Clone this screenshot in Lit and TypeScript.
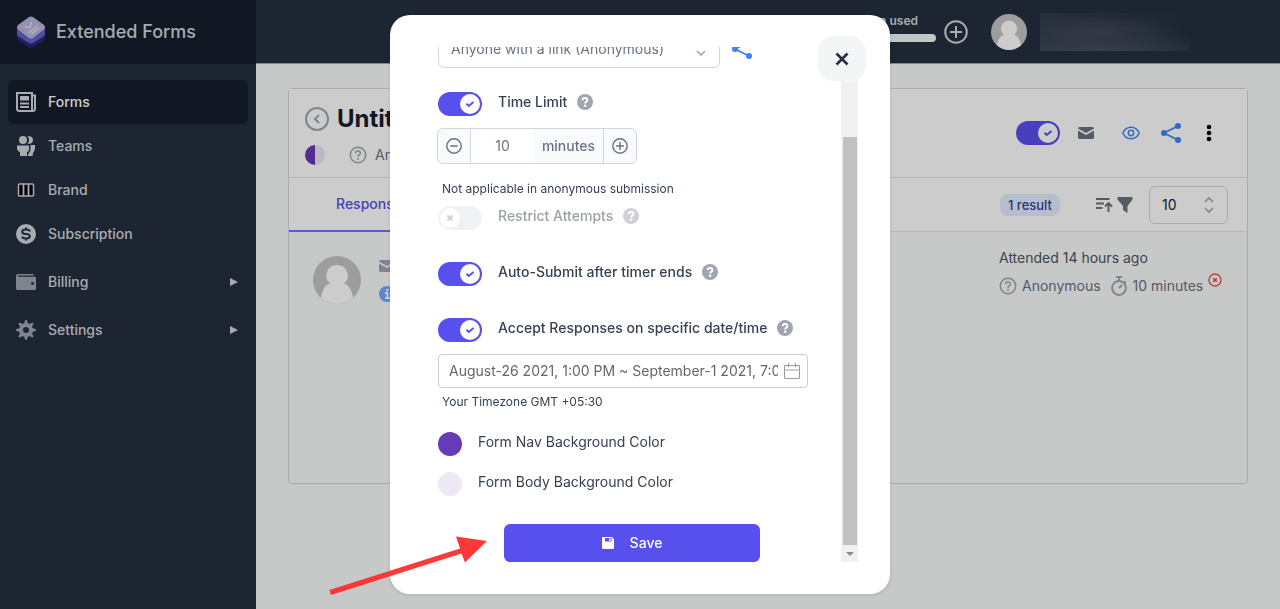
import { LitElement, html, css, svg, nothing, TemplateResult } from "lit";
import { customElement, state } from "lit/decorators.js";
import { classMap } from "lit/directives/class-map.js";

const icon = (w: number, h: number, body: TemplateResult, cls = "") =>
  html`<svg class="icon ${cls}" width=${w} height=${h} viewBox="0 0 ${w} ${h}" aria-hidden="true">${body}</svg>`;

const logo = icon(30, 32, svg`
  <path d="M1 17v5q0 1.500 1.500 2.500l10.500 6.500q2 1 4 0l10.500-6.500q1.500-1 1.500-2.500v-5z" fill="#2c2580"/>
  <path d="M1 13v5q0 1.500 1.500 2.500l10.500 6.500q2 1 4 0l10.500-6.500q1.500-1 1.500-2.500v-5z" fill="#6a60c4"/>
  <path d="M13 1q2-1.200 4 0l11 8q2 2.200 0 4.500l-11 8.500q-2 1.200-4 0l-11-8.500q-2-2.300 0-4.500z" fill="#b9b4dc"/>
  <path d="M9 11l5 .5l1.500-5M13 16.500l8-6.500M16 17.500l7-5.500" fill="none" stroke="#e4e2f2" stroke-width="1.400" stroke-linecap="round"/>`);

const formsIcon = icon(20, 20, svg`
  <path d="M1 1h15v18H3.500Q1 19 1 16.500zM16 3.500h3v13Q19 19 16.500 19H14" fill="none" stroke="currentColor" stroke-width="2"/>
  <path d="M4 4h9v4.500H4zM4 10.500h9v2H4zM4 14h9v2H4z" fill="currentColor"/>`);
const teamsIcon = icon(20, 20, svg`
  <circle cx="7" cy="4" r="4" fill="currentColor"/>
  <path d="M1 9.500h12v4q0 2-2 2.500V20H4v-4q-3-1-3-4zM11.500 0Q17 0 17 4t-5.500 4Q13 6.500 13 4t-1.500-4zM14.500 9H19v4l-1 2.500q-1 .5-1.500 4.500H12v-1.500q1-1.500 1.500-2.500q1.200-1 1-4z" fill="currentColor"/>`);
const brandIcon = icon(20, 20, svg`
  <rect x="2.500" y="4" width="15" height="12" rx="1" fill="#000" stroke="currentColor" stroke-width="1.500"/>
  <path d="M7.500 4v12M12.500 4v12" stroke="currentColor" stroke-width="1.800"/>`);
const dollarIcon = icon(20, 20, svg`
  <circle cx="10" cy="10" r="10" fill="currentColor"/>
  <path d="M13.800 7.500Q13.800 5.500 10 5.500T6.200 7.700T10 10t3.800 2.300T10 14.500t-3.800-2M10 3.500v2M10 14.500v2" fill="none" stroke="#252f3f" stroke-width="2"/>`);
const walletIcon = icon(20, 20, svg`
  <path fill-rule="evenodd" d="M2 2h15.500v1.500H2V4.700h16.500Q20 4.700 20 6v10.500q0 1.500-1.500 1.500h-17Q0 18 0 16.500V4q0-2 2-2zM16.500 10a1.500 1.500 0 1 0 .01 0z" fill="#9fa6b2"/>`);
const gearIcon = icon(20, 20, svg`
  <circle cx="10" cy="10" r="5" fill="none" stroke="#9fa6b2" stroke-width="4"/>
  ${[0, 45, 90, 135, 180, 225, 270, 315].map((a) => svg`<path d="M8 4l1.300-4h1.400L12 4z" fill="#9fa6b2" transform="rotate(${a} 10 10)"/>`)}`);

const plusCircle = (s: number, w: number) => html`<svg class="icon" width=${s} height=${s} viewBox="0 0 24 24" aria-hidden="true">
  <circle cx="12" cy="12" r="10.800" fill="none" stroke="currentColor" stroke-width=${w}/><path d="M12 6v12M6 12h12" stroke="currentColor" stroke-width=${w}/></svg>`;
const minusCircle = html`<svg class="icon" width="16" height="16" viewBox="0 0 24 24" aria-hidden="true">
  <circle cx="12" cy="12" r="10.800" fill="none" stroke="currentColor" stroke-width="2.200"/><path d="M6.500 12h11" stroke="currentColor" stroke-width="2.200"/></svg>`;
const avatar = (s: number) => html`<svg class="icon" width=${s} height=${s} viewBox="0 0 48 48" role="img" aria-label="Avatar">
  <circle cx="24" cy="24" r="24" fill="#c5c5c5"/><path d="M24 9a10.500 10.500 0 0 1 7 18.500c5 1.500 8 7 9 14.300A24 24 0 0 1 8 41.800c1-7.300 4-12.800 9-14.300A10.500 10.500 0 0 1 24 9z" fill="#fff"/></svg>`;
const askOutline = icon(18, 18, svg`
  <circle cx="9" cy="9" r="7.700" fill="none" stroke="#9fa6b2" stroke-width="1.500"/>
  <path d="M6.600 7.200Q6.800 5 9 5t2.400 2q0 1.300-1.300 2Q9 9.600 9 10.800" fill="none" stroke="#9fa6b2" stroke-width="1.500"/><circle cx="9" cy="13" r="1" fill="#9fa6b2"/>`);
const helpIcon = icon(16, 16, svg`
  <circle cx="8" cy="8" r="8" fill="currentColor"/>
  <path d="M5.600 6.200Q5.800 4 8.100 4t2.300 2q0 1.200-1.200 1.800Q8.200 8.400 8.200 9.500" fill="none" stroke="#fff" stroke-width="1.900"/><circle cx="8.200" cy="11.800" r="1.200" fill="#fff"/>`, "help");
const mailIcon = icon(16, 16, svg`<path d="M1.500 2h13q1.500 0 1.500 1.500L8 8L0 3.500Q0 2 1.500 2zM0 5.500L8 10l8-4.500v7q0 1.500-1.500 1.500h-13Q0 14 0 12.500z" fill="currentColor"/>`);
const eyeIcon = icon(18, 18, svg`
  <path d="M.8 9Q3.500 3.200 9 3.200T17.200 9Q14.500 14.800 9 14.800T.8 9z" fill="none" stroke="#3f83f8" stroke-width="1.500"/>
  <circle cx="9" cy="9" r="2.700" fill="none" stroke="#3f83f8" stroke-width="1.500"/>`);
const shareIcon = icon(22, 22, svg`
  <path d="M18 4L4 11l14 7" fill="none" stroke="#3f83f8" stroke-width="1.800"/>
  <circle cx="18" cy="4" r="3" fill="#3f83f8"/><circle cx="4" cy="11" r="3" fill="#3f83f8"/><circle cx="18" cy="18" r="3" fill="#3f83f8"/>`);
const dotsIcon = icon(6, 18, svg`<circle cx="3" cy="3" r="2.300"/><circle cx="3" cy="9" r="2.300"/><circle cx="3" cy="15" r="2.300"/>`);
const sortIcon = icon(17, 16, svg`
  <path d="M0 2h13.500M0 6.500h8M0 11h6.500M12.500 15V6M9 9.500l3.500-3.500L16 9.500" fill="none" stroke="currentColor" stroke-width="1.900"/>`);
const funnelIcon = icon(16, 16, svg`<path d="M.5 0h15v2.500L10.500 9v7L6 13V9L.5 2.500z" fill="currentColor"/>`);
const timerIcon = icon(18, 20, svg`
  <circle cx="9" cy="12" r="6.900" fill="none" stroke="#9fa6b2" stroke-width="2"/>
  <path d="M6 1h6M9 1v3.500M14 5.500l2 1.500M9 12l3-3" stroke="#9fa6b2" stroke-width="2"/>`);
const redX = icon(14, 14, svg`
  <circle cx="7" cy="7" r="6" fill="none" stroke="#f05252" stroke-width="1.400"/><path d="M5.200 5.200l3.600 3.600M8.800 5.200l-3.600 3.600" stroke="#f05252" stroke-width="1.600"/>`, "failed");
const calendarIcon = icon(16, 16, svg`
  <path d="M.5 2.500h15v13H.5zM.5 7h15M4.500 0v4M11.500 0v4" fill="none" stroke="#9a9a9a"/>`);
const diskIcon = icon(12, 12, svg`
  <path fill-rule="evenodd" d="M1 0h8.500L12 2v9q0 1-1 1H1q-1 0-1-1V1q0-1 1-1zM3 1v3.500h6.500V1zM7 1.500h1.500V4H7z" fill="#fff"/>`);

@customElement("app-root")
export class AppRoot extends LitElement {
  @state() private minutes = 10;

  static styles = css`
    :host { display: block; font-family: Inter, "Liberation Sans", sans-serif; font-size: 14px; line-height: 20px; color: #252f3f; }
    * { box-sizing: border-box; }
    button, input, select { font: inherit; color: inherit; margin: 0; }
    button { border: 0; padding: 0; background: none; cursor: pointer; display: inline-flex; align-items: center; justify-content: center; }
    a { color: inherit; text-decoration: none; }
    .icon { display: block; flex: none; }
    .layout { display: grid; grid-template-columns: 256px minmax(0, 1fr); min-height: 100vh; background: #f9fafb; }

    .sidebar { background: #252f3f; color: #d2d6dc; }
    .brand { display: flex; align-items: center; gap: 10px; height: 64px; padding: 0 16px; background: #161e2e; font-size: 18px; font-weight: 500; color: #d2d6dc; }
    .nav { display: flex; flex-direction: column; padding: 16px 8px; font-weight: 500; }
    .item { display: flex; align-items: center; gap: 12px; height: 44px; padding: 0 8px; border-radius: 6px; }
    .item.active { background: #161e2e; color: #fff; }
    .item.active .icon { color: #d2d6dc; }
    .item.group { margin-top: 4px; }
    .caret { margin-left: auto; margin-right: 2px; border: 4px solid transparent; border-left: 8px solid #d2d6dc; border-right: 0; }

    .topbar { display: flex; align-items: center; justify-content: flex-end; height: 64px; padding: 0 90px 0 0; background: #252f3f; border-bottom: 1px solid #9fa6b2; color: #d2d6dc; }
    .usage { width: 200px; display: grid; gap: 6px; margin-right: 8px; padding-bottom: 8px; font-size: 12px; font-weight: 600; line-height: 14px; }
    .usage-text { padding-right: 18px; text-align: right; }
    .bar { height: 8px; border-radius: 4px; background: #f4f5f7; }
    .topbar .avatar { margin: 0 13px 0 23px; }
    .account { width: 150px; height: 38px; background: radial-gradient(ellipse 60% 45% at 35% 50%, #414957, transparent), radial-gradient(ellipse 85% 50% at 40% 100%, #465060, transparent), linear-gradient(90deg, #303b4b, #252f3f); }

    .page { padding: 24px 32px; }
    .card { border: 1px solid #d2d6dc; border-radius: 4px; min-height: 396px; }
    .head { display: flex; align-items: center; justify-content: space-between; height: 89px; padding: 0 35px 0 16px; background: #fff; border-bottom: 1px solid #e5e7eb; }
    .heading { padding-top: 2px; }
    .title-row { display: flex; align-items: center; gap: 8px; margin-bottom: 10px; }
    .title { margin: 0; font-size: 24px; line-height: 32px; font-weight: 700; color: #161e2e; }
    .meta { display: flex; align-items: center; gap: 8px; color: #6b7280; }
    .meta .icon { margin-left: 16px; }
    .half { width: 20px; height: 20px; border-radius: 50%; background: linear-gradient(90deg, #673ab7 50%, #ede7f6 50%); }
    .actions { display: flex; align-items: center; gap: 28px; color: #6b7280; }
    .actions .first { margin-right: -10px; }
    .actions .spaced { margin-left: -8px; }
    .actions .last { margin-left: -4px; }
    .tabs { display: flex; align-items: center; justify-content: space-between; height: 54px; padding-right: 19px; background: #fff; border-bottom: 1px solid #e5e7eb; }
    .tab { height: 54px; padding: 0 47px; display: flex; align-items: center; color: #5850ec; font-weight: 500; border-bottom: 2px solid #6875f5; }
    .tools { display: flex; align-items: center; color: #6b7280; }
    .pill { padding: 1px 8px; margin-right: 36px; border-radius: 8px; font-size: 13px; font-weight: 500; background: #e1effe; color: #42389d; }
    .funnel { margin: 0 16px 0 4px; }
    .picker { position: relative; display: block; }
    .picker select { appearance: none; display: block; border: 1px solid #d2d6dc; border-radius: 6px; background: #fff; width: 100%; height: 38px; padding: 0 12px; }
    .picker .icon { position: absolute; pointer-events: none; right: 14px; top: 10px; }
    .picker.count { width: 79px; color: #161e2e; }
    .entry { display: flex; justify-content: space-between; padding: 16px 23px 16px 24px; }
    .person { display: flex; gap: 18px; padding-top: 8px; color: #9fa6b2; }
    .person-icons { display: grid; gap: 12px; align-content: start; padding-top: 2px; }
    .attend { width: 225px; color: #4b5563; }
    .attend-row { display: flex; align-items: center; gap: 5px; margin-top: 5px; color: #6b7280; }
    .attend-row .timer { margin-left: 4px; }
    .failed { margin-bottom: 12px; }

    .shade { position: fixed; inset: 0; display: flex; align-items: center; justify-content: center; background: rgba(0, 0, 0, 0.2); }
    .modal { position: relative; display: flex; width: 500px; max-width: 100%; height: calc(100vh - 30px); padding: 32px 32px 32px 44px; border-radius: 20px; background: #fff; box-shadow: 0 1px 4px rgba(0, 0, 0, 0.12); }
    .close { position: absolute; right: 24px; top: 21px; width: 48px; height: 45px; border-radius: 16px; background: #f4f5f7; }
    .clip { flex: 1; display: flex; flex-direction: column; justify-content: flex-end; overflow: hidden; padding: 0 15px 0 4px; }
    .form { display: flex; flex-direction: column; }
    .share-row { display: flex; align-items: center; gap: 11px; margin-bottom: 24px; }
    .picker.access { width: 282px; color: #6b7280; }
    .row { display: flex; align-items: flex-start; gap: 16px; }
    .row.apart { margin-top: 32px; }
    .row-label { display: flex; align-items: center; gap: 10px; font-weight: 500; color: #374151; }
    .row.off { margin-top: 8px; opacity: 0.5; }
    .help { color: #9fa6b2; }
    .toggle { position: relative; display: block; width: 44px; height: 24px; color: #5850ec; }
    .toggle input { appearance: none; display: block; width: 44px; height: 24px; border-radius: 12px; background: #5850ec; }
    .toggle .icon { position: absolute; top: 2px; right: 2px; pointer-events: none; }
    .toggle.off { color: #9fa6b2; }
    .toggle.off input { background: #e5e7eb; }
    .toggle.off .icon { right: auto; left: 2px; }
    .stepper { display: grid; grid-template-columns: 32px 64px 70px 32px; width: 200px; height: 36px; margin: 12px 0 16px -1px; border: 1px solid #d2d6dc; border-radius: 6px; background: #f9fafb; color: #6b7280; overflow: hidden; }
    .stepper input { width: 100%; border: 0; border-left: 1px solid #d2d6dc; background: #fff; text-align: center; padding: 0; }
    .stepper .unit { display: flex; align-items: center; justify-content: center; font-weight: 500; border-right: 1px solid #d2d6dc; }
    .note { margin: 0; padding-left: 4px; font-size: 12px; line-height: 18px; color: #374151; }
    .dates { display: flex; align-items: center; gap: 6px; height: 34px; margin: 12px 18px 5px 0; padding: 0 7px 0 10px; border: 1px solid #ccc; border-radius: 4px; background: #fff; color: #666; }
    .dates input { flex: 1; min-width: 0; border: 0; padding: 0; background: none; }
    .swatches { display: grid; gap: 16px; margin: 21px 0 28px; color: #374151; }
    .swatch { appearance: none; width: 24px; height: 24px; padding: 0; border: 0; border-radius: 50%; overflow: hidden; background: none; }
    .swatch::-webkit-color-swatch-wrapper { padding: 0; }
    .swatch::-webkit-color-swatch { border: 0; }
    .save { align-self: center; gap: 16px; width: 256px; height: 38px; border-radius: 6px; background: #5850ec; color: #fff; font-weight: 500; }
    .scroll { display: flex; flex-direction: column; width: 17px; padding: 17px 1px 0 2px; background: #f1f1f1; }
    .thumb { flex: 408; background: #c1c1c1; }
    .before { flex: 73; }
    .down { height: 17px; display: flex; align-items: center; justify-content: center; }
    .down::after { content: ""; border: 4px solid transparent; border-top-color: #8a8a8a; border-bottom: 0; }
    .arrow { position: absolute; left: -62px; bottom: -6px; pointer-events: none; }
  `;

  private toggle(id: string, on: boolean, label: string | null = null) {
    return html`<span class="toggle ${classMap({ off: !on })}">
      <input type="checkbox" id=${id} .checked=${on} ?disabled=${!on} aria-label=${label ?? nothing} />
      ${icon(20, 20, svg`<circle cx="10" cy="10" r="10" fill="#fff"/>
        <path d=${on ? "M6.500 9.800l2.300 2.200L13.500 8" : "M7.500 7.500l5 5M12.500 7.500l-5 5"} fill="none" stroke="currentColor" stroke-width="2"/>`)}
    </span>`;
  }

  private setting(id: string, text: string, on = true, cls = "") {
    return html`<div class="row ${cls}">
      ${this.toggle(id, on)}
      <div class="row-label"><label for=${id}>${text}</label>${helpIcon}</div>
    </div>`;
  }

  private navItem(text: string, glyph: TemplateResult, cls = "", caret = false) {
    return html`<a class="item ${cls}" href="#">${glyph}<span>${text}</span>${caret ? html`<i class="caret"></i>` : nothing}</a>`;
  }

  private color(id: string, text: string, value: string) {
    return html`<div class="row"><input class="swatch" type="color" id=${id} .value=${value} /><label for=${id}>${text}</label></div>`;
  }

  render() {
    return html`
      <div class="layout">
        <aside class="sidebar">
          <div class="brand">${logo}<span>Extended Forms</span></div>
          <nav class="nav">
            ${this.navItem("Forms", formsIcon, "active")}
            ${this.navItem("Teams", teamsIcon)}
            ${this.navItem("Brand", brandIcon)}
            ${this.navItem("Subscription", dollarIcon)}
            ${this.navItem("Billing", walletIcon, "group", true)}
            ${this.navItem("Settings", gearIcon, "group", true)}
          </nav>
        </aside>
        <div>
          <header class="topbar">
            <div class="usage"><span class="usage-text">1 submission used</span><div class="bar"></div></div>
            <button aria-label="Add">${plusCircle(24, 2)}</button>
            <span class="avatar">${avatar(36)}</span>
            <div class="account"></div>
          </header>
          <main class="page">
            <section class="card">
              <div class="head">
                <div class="heading">
                  <div class="title-row">
                    <button aria-label="Back">${icon(24, 24, svg`<circle cx="12" cy="12" r="11" fill="none" stroke="#9fa6b2" stroke-width="2"/><path d="M14 8l-4 4l4 4" fill="none" stroke="#9fa6b2" stroke-width="2"/>`)}</button>
                    <h1 class="title">Untitled</h1>
                  </div>
                  <div class="meta"><span class="half"></span>${askOutline}<span>Anonymous</span></div>
                </div>
                <div class="actions">
                  <span class="first">${this.toggle("live", true, "Accept responses")}</span>
                  <button aria-label="Email">${mailIcon}</button>
                  <button aria-label="Preview">${eyeIcon}</button>
                  <button class="spaced" aria-label="Share">${shareIcon}</button>
                  <button class="last" aria-label="More">${dotsIcon}</button>
                </div>
              </div>
              <div class="tabs">
                <a class="tab" href="#">Responses</a>
                <div class="tools">
                  <span class="pill">1 result</span>
                  <button aria-label="Sort">${sortIcon}</button>
                  <button class="funnel" aria-label="Filter">${funnelIcon}</button>
                  <div class="picker count">
                    <select aria-label="Results per page"><option>10</option></select>
                    ${icon(10, 18, svg`<path d="M1 6l4-4l4 4M1 12l4 4l4-4" fill="none" stroke="#9fa6b2" stroke-width="1.600"/>`)}
                  </div>
                </div>
              </div>
              <div class="entry">
                <div class="person">
                  ${avatar(48)}
                  <div class="person-icons">
                    ${mailIcon}
                    ${icon(16, 16, svg`<circle cx="8" cy="8" r="8" fill="#76a9fa"/><path d="M6 7h2.500v5M6 12h5" fill="none" stroke="#fff" stroke-width="1.800"/><circle cx="8.300" cy="4" r="1.300" fill="#fff"/>`)}
                  </div>
                </div>
                <div class="attend">
                  <div>Attended 14 hours ago</div>
                  <div class="attend-row">${askOutline}<span>Anonymous</span><span class="timer">${timerIcon}</span><span>10 minutes</span>${redX}</div>
                </div>
              </div>
            </section>
          </main>
        </div>
      </div>

      <div class="shade">
        <div class="modal" role="dialog" aria-label="Form settings">
          <div class="clip">
            <form class="form" @submit=${(e: Event) => e.preventDefault()}>
              <div class="share-row">
                <div class="picker access">
                  <select aria-label="Who can respond"><option>Anyone with a link (Anonymous)</option></select>
                  ${icon(10, 18, svg`<path d="M1 11l4 4l4-4" fill="none" stroke="#9fa6b2" stroke-width="1.600"/>`)}
                </div>
                ${shareIcon}
              </div>
              ${this.setting("limit", "Time Limit")}
              <div class="stepper">
                <button type="button" aria-label="Decrease" @click=${() => (this.minutes = Math.max(1, this.minutes - 1))}>${minusCircle}</button>
                <input id="minutes" aria-label="Minutes" inputmode="numeric" .value=${String(this.minutes)} />
                <label class="unit" for="minutes">minutes</label>
                <button type="button" aria-label="Increase" @click=${() => (this.minutes += 1)}>${plusCircle(16, 2.2)}</button>
              </div>
              <p class="note">Not applicable in anonymous submission</p>
              ${this.setting("restrict", "Restrict Attempts", false, "off")}
              ${this.setting("auto", "Auto-Submit after timer ends", true, "apart")}
              ${this.setting("window", "Accept Responses on specific date/time", true, "apart")}
              <div class="dates">
                <input aria-label="Date range" value="August-26 2021, 1:00 PM ~ September-1 2021, 7:00 PM" />
                ${calendarIcon}
              </div>
              <p class="note">Your Timezone GMT +05:30</p>
              <div class="swatches">
                ${this.color("navcolor", "Form Nav Background Color", "#673ab7")}
                ${this.color("bodycolor", "Form Body Background Color", "#ede7f6")}
              </div>
              <button class="save" type="submit">${diskIcon}<span>Save</span></button>
            </form>
          </div>
          <div class="scroll" aria-hidden="true"><div class="before"></div><div class="thumb"></div><div class="down"></div></div>
          <button class="close" aria-label="Close">${icon(14, 14, svg`<path d="M1.500 1.500l11 11M12.500 1.500l-11 11" stroke="#252f3f" stroke-width="2.600"/>`)}</button>
          ${icon(162, 66, svg`<path d="M1.300 56L132 14.500L128 2.500L159 7L137 28.500L133.500 19.500L3 61z" fill="#ff2d2d" fill-opacity="0.950"/>`, "arrow")}
        </div>
      </div>
    `;
  }
}
